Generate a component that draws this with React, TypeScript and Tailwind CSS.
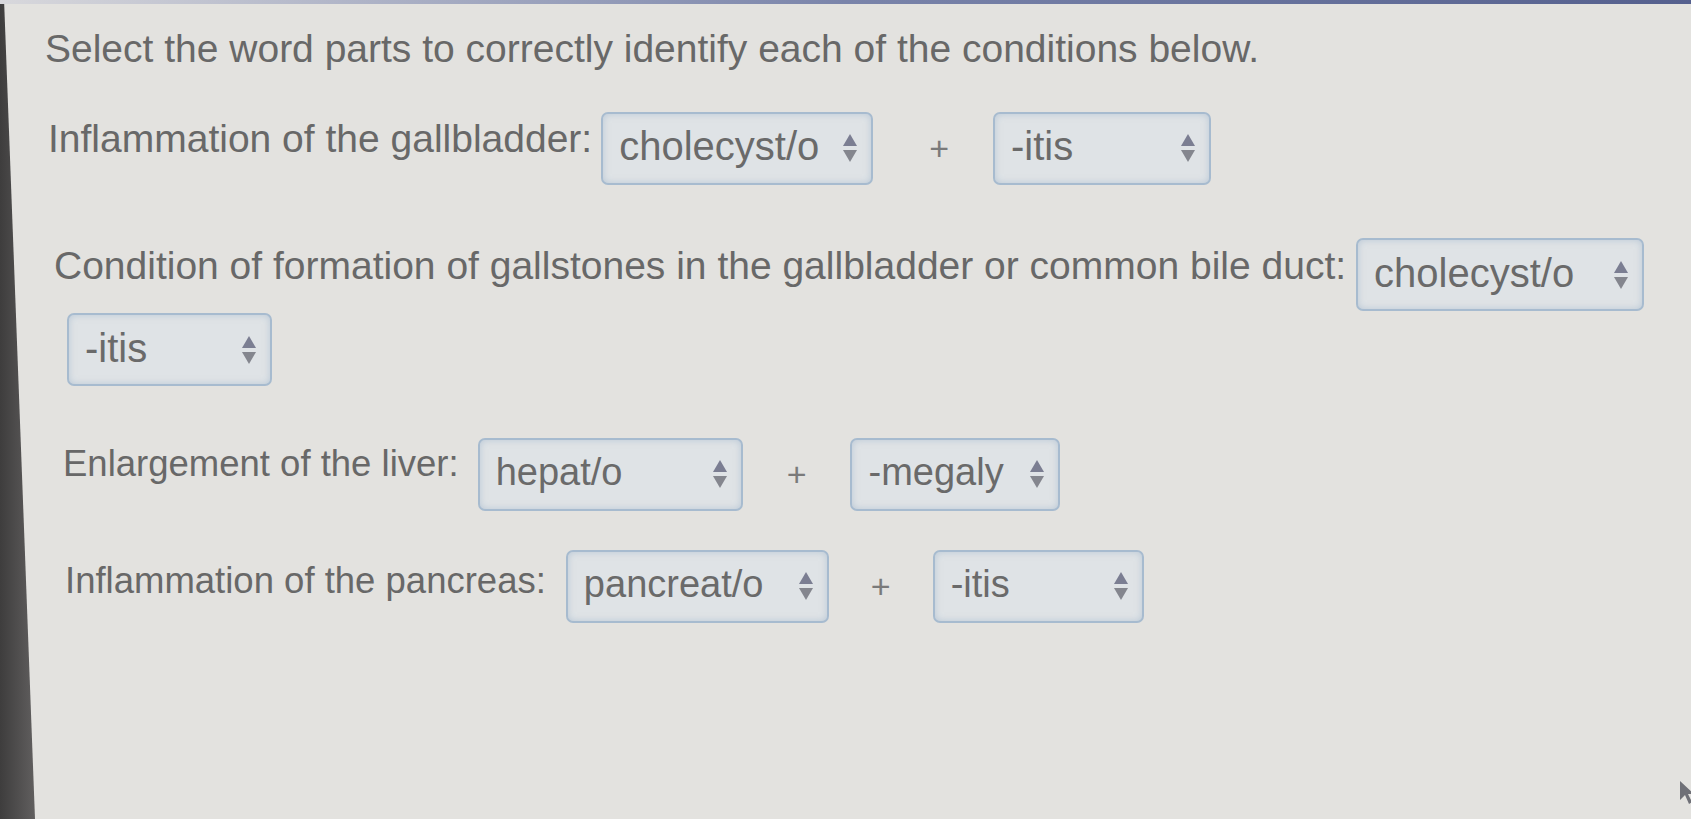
const font = { fontFamily: '"Liberation Sans", Arial, sans-serif' };

type DropProps = { value: string; width: string; size?: string };

// up/down stepper glyph used by the native-looking select
const Arrows = () => (
    <svg width="16" height="32" viewBox="0 0 16 32" className="shrink-0">
        <path d="M8 2 L15 14 L1 14 Z" fill="#7b7e92" />
        <path d="M8 30 L15 18 L1 18 Z" fill="#84868e" />
    </svg>
);

const Drop = ({ value, width, size = "text-[40px]" }: DropProps) => (
    <div
        className={`${width} ${size} h-[73px] shrink-0 flex items-center justify-between pl-[16px] pr-[13px] rounded-[7px] border-2 border-[#a7bbcf] bg-[#dfe3e6] shadow-[inset_0_0_7px_rgba(160,182,204,0.6)] text-[#6a6a6a]`}
    >
        <span className="leading-none pb-[4px]">{value}</span>
        <Arrows />
    </div>
);

const Plus = ({ gap }: { gap: string }) => (
    <span className={`${gap} text-[34px] text-[#7a7a7a] leading-none`}>+</span>
);

export default function App() {
    return (
        <div
            style={font}
            className="relative w-[1691px] h-[819px] overflow-hidden flex flex-col bg-[#e3e2df]"
        >
            <div className="h-[4px] w-full shrink-0 bg-gradient-to-r from-[#d8d8dc] via-[#7a84aa] to-[#55608e]" />
            <div className="flex flex-1">
                {/* monitor bezel on the left */}
                <div className="w-[35px] shrink-0 bg-gradient-to-r from-[#3e3d3d] to-[#615f5f] [clip-path:polygon(0_0,12%_0,100%_100%,0_100%)]" />
                <div className="flex-1 flex flex-col text-[#686868] text-[39px]">
                    <h1 className="pl-[10px] pt-[22px] leading-[46px]">
                        Select the word parts to correctly identify each of the conditions below.
                    </h1>

                    <div className="flex items-center pl-[13px] mt-[38px]">
                        <span className="mr-[9px] pb-[18px]">Inflammation of the gallbladder:</span>
                        <Drop value="cholecyst/o" width="w-[272px]" />
                        <Plus gap="ml-[56px] mr-[44px]" />
                        <Drop value="-itis" width="w-[218px]" />
                    </div>

                    <div className="flex items-center pl-[19px] mt-[50px]">
                        <span className="mr-[10px] pb-[18px]">
                            Condition of formation of gallstones in the gallbladder or common bile duct:
                        </span>
                        <Drop value="cholecyst/o" width="w-[288px]" />
                    </div>
                    <div className="flex items-center pl-[32px]">
                        <Drop value="-itis" width="w-[205px]" />
                    </div>

                    <div className="flex items-center pl-[28px] mt-[51px] text-[36.5px]">
                        <span className="mr-[19px] pb-[20px]">Enlargement of the liver:</span>
                        <Drop value="hepat/o" width="w-[265px]" size="text-[38px]" />
                        <Plus gap="mx-[44px]" />
                        <Drop value="-megaly" width="w-[210px]" size="text-[38px]" />
                    </div>

                    <div className="flex items-center pl-[30px] mt-[38px] text-[36.5px]">
                        <span className="mr-[20px] pb-[10px]">Inflammation of the pancreas:</span>
                        <Drop value="pancreat/o" width="w-[263px]" size="text-[38px]" />
                        <Plus gap="mx-[42px]" />
                        <Drop value="-itis" width="w-[211px]" size="text-[38px]" />
                    </div>
                </div>
            </div>

            {/* mouse pointer at the right edge */}
            <svg
                width="16"
                height="26"
                viewBox="0 0 16 26"
                className="absolute left-[1679px] top-[780px]"
            >
                <path d="M1 1 L1 20 L6 15 L10 24 L13 22 L9 14 L15 14 Z" fill="#6f7077" />
            </svg>
        </div>
    );
}
